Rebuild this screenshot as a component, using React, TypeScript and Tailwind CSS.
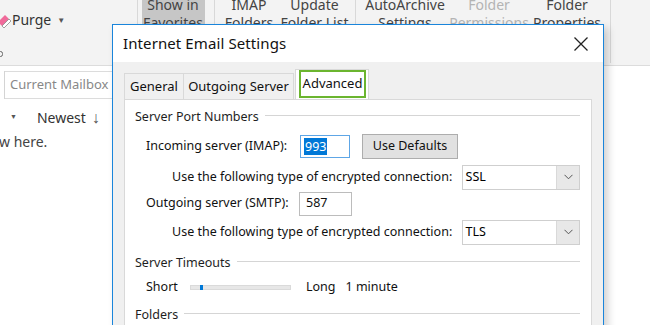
import React from "react";

const font = { fontFamily: '"Noto Sans", "Open Sans", sans-serif' };

function GroupHeader({ text }: { text: string }) {
  return (
    <div className="flex items-center h-[26px]">
      <span className="text-[12.5px] text-[#1e1e1e] leading-none">{text}</span>
      <div className="flex-1 ml-[6px] mt-[-3px] h-px bg-[#d5d5d5]" />
    </div>
  );
}

function Select({ value }: { value: string }) {
  return (
    <div className="flex w-[119px] h-[25px] border border-[#cfcfcf] bg-white">
      <div className="flex-1 flex items-center pl-[3px] text-[12.5px] text-black">{value}</div>
      <div className="w-[23px] bg-[#e8e8e8] border-l border-[#d9d9d9] flex items-center justify-center">
        <svg width="9" height="6" viewBox="0 0 9 6">
          <path d="M0.5 0.8 L4.5 4.8 L8.5 0.8" fill="none" stroke="#555" strokeWidth="1" />
        </svg>
      </div>
    </div>
  );
}

export default function App() {
  return (
    <div className="relative w-[650px] h-[325px] overflow-hidden bg-white" style={font}>
      {/* Ribbon */}
      <div className="h-[66px] bg-[#f3f3f3] border-b border-[#dcdcdc] flex text-[14px] text-[#444] leading-[18px]">
        <div className="w-[138px] relative border-r border-[#d8d8d8] h-[63px]">
          <div className="absolute left-[-4px] top-[12px]">
            <svg width="16" height="20" viewBox="0 0 16 20">
              <path d="M2 10 L9 3 L13 7 L6 14 Z" fill="#f06a9a" />
              <path d="M6 14 L13 7 L15 9 L8 16 Z" fill="#ffffff" stroke="#888" strokeWidth="0.8" />
            </svg>
          </div>
          <div className="absolute left-[12px] top-[11px] flex items-center text-[#333] text-[14px]">
            <span>Purge</span>
            <span className="ml-[6px] text-[8px] text-[#555]">▼</span>
          </div>
          <div className="absolute left-[-2px] top-[51px] w-[5px] h-[6px] rounded-full border border-[#666]" />
        </div>
        <div className="w-[77px] h-[63px] border-r border-[#d8d8d8] flex justify-center">
          <div className="w-[63px] h-[40px] bg-[#c6c6c6] ml-[-6px] flex flex-col items-center">
            <span className="mt-[-4px]">Show in</span>
            <span>Favorites</span>
          </div>
        </div>
        <div className="flex flex-col items-center w-[60px] ml-[4px] mt-[-4px]">
          <span>IMAP</span>
          <span>Folders</span>
        </div>
        <div className="flex flex-col items-center w-[77px] pr-[5px] mt-[-4px] border-r border-[#d8d8d8] h-[67px]">
          <span>Update</span>
          <span className="whitespace-nowrap">Folder List</span>
        </div>
        <div className="flex flex-col items-center w-[98px] mt-[-4px]">
          <span>AutoArchive</span>
          <span>Settings</span>
        </div>
        <div className="flex flex-col items-center w-[70px] mt-[-4px] text-[#b4b4b4]">
          <span>Folder</span>
          <span>Permissions</span>
        </div>
        <div className="flex flex-col items-center w-[87px] mt-[-4px] border-r border-[#d8d8d8] h-[67px]">
          <span>Folder</span>
          <span>Properties</span>
        </div>
      </div>

      {/* Search row */}
      <div className="flex h-[28px] mt-[5px]">
        <div className="w-[5px] border-r border-[#d4d4d4]" />
        <div className="w-[120px] border-t border-b border-[#dcdcdc] flex items-center pl-[5px] text-[13px] text-[#888] whitespace-nowrap">
          Current Mailbox <span className="ml-[6px] text-[8px]">▼</span>
        </div>
      </div>

      {/* List header */}
      <div className="flex items-center h-[26px] mt-[5px] text-[14px] text-[#333]">
        <span className="ml-[10px] text-[7px] text-[#555]">▼</span>
        <span className="ml-[20px]">Newest</span>
        <span className="ml-[6px] text-[16px] text-[#555]">↓</span>
      </div>
      <div className="text-[14px] text-[#444] ml-[-1px] mt-[1px]">w here.</div>

      {/* Dialog window */}
      <div className="absolute left-[112px] top-[24px] w-[492px] h-[310px] bg-[#f0f0f0] border border-[#1a85db] shadow-[4px_4px_8px_rgba(0,0,0,0.18)]">
        {/* title bar */}
        <div className="h-[37px] bg-white flex items-center pl-[10px] pr-[14px]">
          <span className="text-[15px] text-[#111] tracking-[0.1px]">Internet Email Settings</span>
          <div className="flex-1" />
          <svg width="16" height="16" viewBox="0 0 16 16">
            <path d="M1.5 1.5 L14.5 14.5 M14.5 1.5 L1.5 14.5" stroke="#222" strokeWidth="1.3" />
          </svg>
        </div>
        {/* body */}
        <div className="pl-[11px] pt-[7px] pr-[11px]">
          {/* tabs */}
          <div className="flex items-end h-[30px]">
            <div className="h-[26px] w-[60px] border border-b-0 border-[#d9d9d9] flex items-center justify-center text-[13px] text-[#111]">
              General
            </div>
            <div className="h-[26px] w-[110px] border border-b-0 border-l-0 border-[#d9d9d9] flex items-center justify-center text-[13px] text-[#111]">
              Outgoing Server
            </div>
            <div className="h-[30px] w-[74px] bg-white border border-b-0 border-[#d9d9d9] ml-[1px] pl-[3px] pr-[2px]">
              <div className="h-[28px] border-2 border-[#6bb52f] flex items-center justify-center text-[13px] text-[#111]">
                Advanced
              </div>
            </div>
          </div>
          {/* panel */}
          <div className="bg-white border border-[#d9d9d9] h-[230px] pl-[10px] pr-[11px] pt-[4px]">
            <GroupHeader text="Server Port Numbers" />
            <div className="pl-[11px] text-[12.5px]">
              <div className="flex items-center h-[29px] mt-[2px]">
                <span className="w-[154px] text-[#111]">Incoming server (IMAP):</span>
                <div className="w-[50px] h-[23px] border border-[#5ea6e6] flex items-center pl-[3px]">
                  <span className="bg-[#0078d7] text-white leading-[17px] px-[1px]">993</span>
                </div>
                <div className="ml-[12px] w-[96px] h-[25px] bg-[#e1e1e1] border border-[#adadad] flex items-center justify-center text-[#111]">
                  Use Defaults
                </div>
              </div>
              <div className="flex items-center h-[30px] mt-[1px]">
                <span className="ml-[26px] w-[291px] text-[#111] whitespace-nowrap">
                  Use the following type of encrypted connection:
                </span>
                <Select value="SSL" />
              </div>
              <div className="flex items-center h-[27px] mt-[-2px]">
                <span className="w-[153px] text-[#111]">Outgoing server (SMTP):</span>
                <div className="w-[53px] h-[24px] border border-[#bcbcbc] flex items-center pl-[6px] text-[#111]">
                  587
                </div>
              </div>
              <div className="flex items-center h-[30px]">
                <span className="ml-[26px] w-[291px] text-[#111] whitespace-nowrap">
                  Use the following type of encrypted connection:
                </span>
                <Select value="TLS" />
              </div>
            </div>
            <div className="mt-[3px]">
              <GroupHeader text="Server Timeouts" />
            </div>
            <div className="pl-[11px] flex items-center h-[22px] text-[12.5px] text-[#111]">
              <span className="w-[44px]">Short</span>
              <div className="relative w-[101px] h-[5px] bg-[#e7e7e7] border border-[#dadada]">
                <div className="absolute left-[9px] top-[-1px] w-[3px] h-[5px] bg-[#0078d7]" />
              </div>
              <span className="ml-[15px]">Long</span>
              <span className="ml-[10px]">1 minute</span>
            </div>
            <div className="mt-[4px]">
              <GroupHeader text="Folders" />
            </div>
          </div>
        </div>
      </div>
    </div>
  );
}
